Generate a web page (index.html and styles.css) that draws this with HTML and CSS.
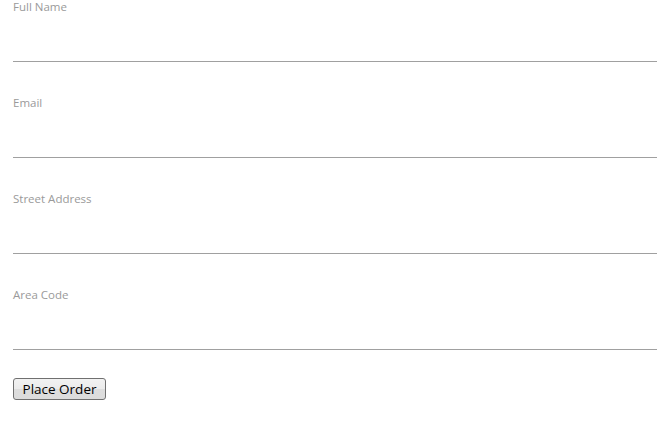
FILE: index.html
```html
<!DOCTYPE html>
<html>
<head>
<meta charset="utf-8">
<link rel="stylesheet" href="styles.css">
</head>
<body>
<form class="order-form">
  <div class="field">
    <label class="field-label">Full Name</label>
    <input class="field-input" type="text">
  </div>
  <div class="field">
    <label class="field-label">Email</label>
    <input class="field-input" type="text">
  </div>
  <div class="field">
    <label class="field-label">Street Address</label>
    <input class="field-input" type="text">
  </div>
  <div class="field">
    <label class="field-label">Area Code</label>
    <input class="field-input" type="text">
  </div>
  <button class="submit-btn" type="button">Place Order</button>
</form>
</body>
</html>
```

FILE: styles.css
```css
html, body {
  margin: 0;
  padding: 0;
  background: #ffffff;
}
.order-form {
  display: flex;
  flex-direction: column;
  padding: 0 1px 0 13px;
  font-family: "Open Sans", "Noto Sans", sans-serif;
}
.field {
  display: flex;
  flex-direction: column;
}
.field + .field {
  margin-top: 34px;
}
.field-label {
  font-size: 11.5px;
  line-height: 14px;
  color: #9a9a9a;
}
.field-input {
  box-sizing: border-box;
  height: 48px;
  margin: 0;
  padding: 0;
  border: none;
  border-bottom: 1px solid #a0a0a0;
  outline: none;
  background: transparent;
  font-family: inherit;
}
.submit-btn {
  align-self: flex-start;
  box-sizing: border-box;
  width: 93px;
  height: 22px;
  margin-top: 28px;
  padding: 0;
  border: 1px solid #707070;
  border-radius: 3px;
  background: linear-gradient(#f2f2f2, #ebebeb 50%, #dddddd 51%, #dcdcdc);
  font-family: "Open Sans", "Noto Sans", sans-serif;
  font-size: 13.5px;
  line-height: 20px;
  color: #000000;
}
```
